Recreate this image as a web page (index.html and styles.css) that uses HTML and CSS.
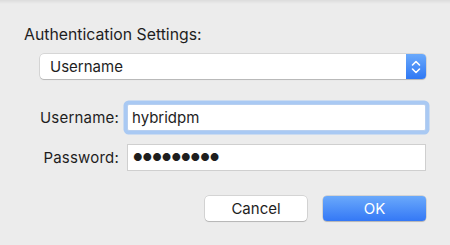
FILE: index.html
```html
<!DOCTYPE html>
<html lang="en">
<head>
    <meta charset="UTF-8">
    <title>Authentication Settings</title>
    <link rel="stylesheet" href="styles.css">
</head>
<body>
    <div class="top-edge"></div>
    <div class="dialog">
        <div class="heading">Authentication Settings:</div>

        <div class="popup">
            <span class="popup-value">Username</span>
            <span class="stepper">
                <svg width="10" height="16" viewBox="0 0 10 16">
                    <path d="M1.5 6 L5 2.5 L8.5 6" fill="none" stroke="#fff" stroke-width="1.6" stroke-linecap="round" stroke-linejoin="round"/>
                    <path d="M1.5 10 L5 13.5 L8.5 10" fill="none" stroke="#fff" stroke-width="1.6" stroke-linecap="round" stroke-linejoin="round"/>
                </svg>
            </span>
        </div>

        <div class="form">
            <label class="label" for="user">Username:</label>
            <div class="field focused" id="user">hybridpm</div>
            <label class="label" for="pass">Password:</label>
            <div class="field password" id="pass">●●●●●●●●●</div>
        </div>

        <div class="buttons">
            <button class="btn">Cancel</button>
            <button class="btn primary">OK</button>
        </div>
    </div>
</body>
</html>
```

FILE: styles.css
```css
body {
    margin: 0;
    background: #ececec;
    font-family: Inter, "Liberation Sans", Arial, sans-serif;
    color: #1e1e1e;
    width: 450px;
    height: 245px;
    overflow: hidden;
}

.top-edge {
    height: 4px;
    background: linear-gradient(#dcdcdc, #ececec);
}

.dialog {
    padding: 22px 24px 0 24px;
}

.heading {
    font-size: 15.8px;
    line-height: 18px;
}

.popup {
    margin: 10px 0 0 16px;
    width: 386px;
    height: 25px;
    box-sizing: border-box;
    background: #fff;
    border-radius: 4px;
    box-shadow: 0 0 0 0.5px rgba(0, 0, 0, 0.18), 0 1px 1px rgba(0, 0, 0, 0.15);
    display: flex;
    align-items: center;
    justify-content: space-between;
}

.popup-value {
    font-size: 15px;
    padding-left: 10px;
}

.stepper {
    width: 20px;
    height: 25px;
    border-radius: 0 4px 4px 0;
    background: linear-gradient(#6aa9fb, #2f78f4);
    display: flex;
    align-items: center;
    justify-content: center;
}

.form {
    margin-top: 25px;
    display: grid;
    grid-template-columns: 95px 299px;
    column-gap: 8px;
    row-gap: 13px;
    align-items: center;
}

.label {
    text-align: right;
    font-size: 15px;
    letter-spacing: 0.2px;
}

.field {
    height: 27px;
    box-sizing: border-box;
    background: #fff;
    border: 1px solid #cfcfcf;
    font-size: 15px;
    line-height: 25px;
    padding-left: 4px;
}

.field.focused {
    border-color: #b7cff0;
    border-radius: 2px;
    box-shadow: 0 0 0 3.5px #a9c9f3;
}

.field.password {
    font-size: 10.5px;
    padding-left: 5px;
}

.buttons {
    margin-top: 25px;
    display: flex;
    justify-content: flex-end;
    gap: 16px;
}

.btn {
    width: 102px;
    height: 25px;
    border: none;
    border-radius: 4px;
    background: #fff;
    box-shadow: 0 0 0 0.5px rgba(0, 0, 0, 0.2), 0 1px 1px rgba(0, 0, 0, 0.15);
    font-family: Inter, "Liberation Sans", Arial, sans-serif;
    font-size: 15px;
    color: #1e1e1e;
    padding: 0;
}

.btn.primary {
    width: 103px;
    background: linear-gradient(#6aa9fb, #3478f6);
    color: #fff;
}
```
